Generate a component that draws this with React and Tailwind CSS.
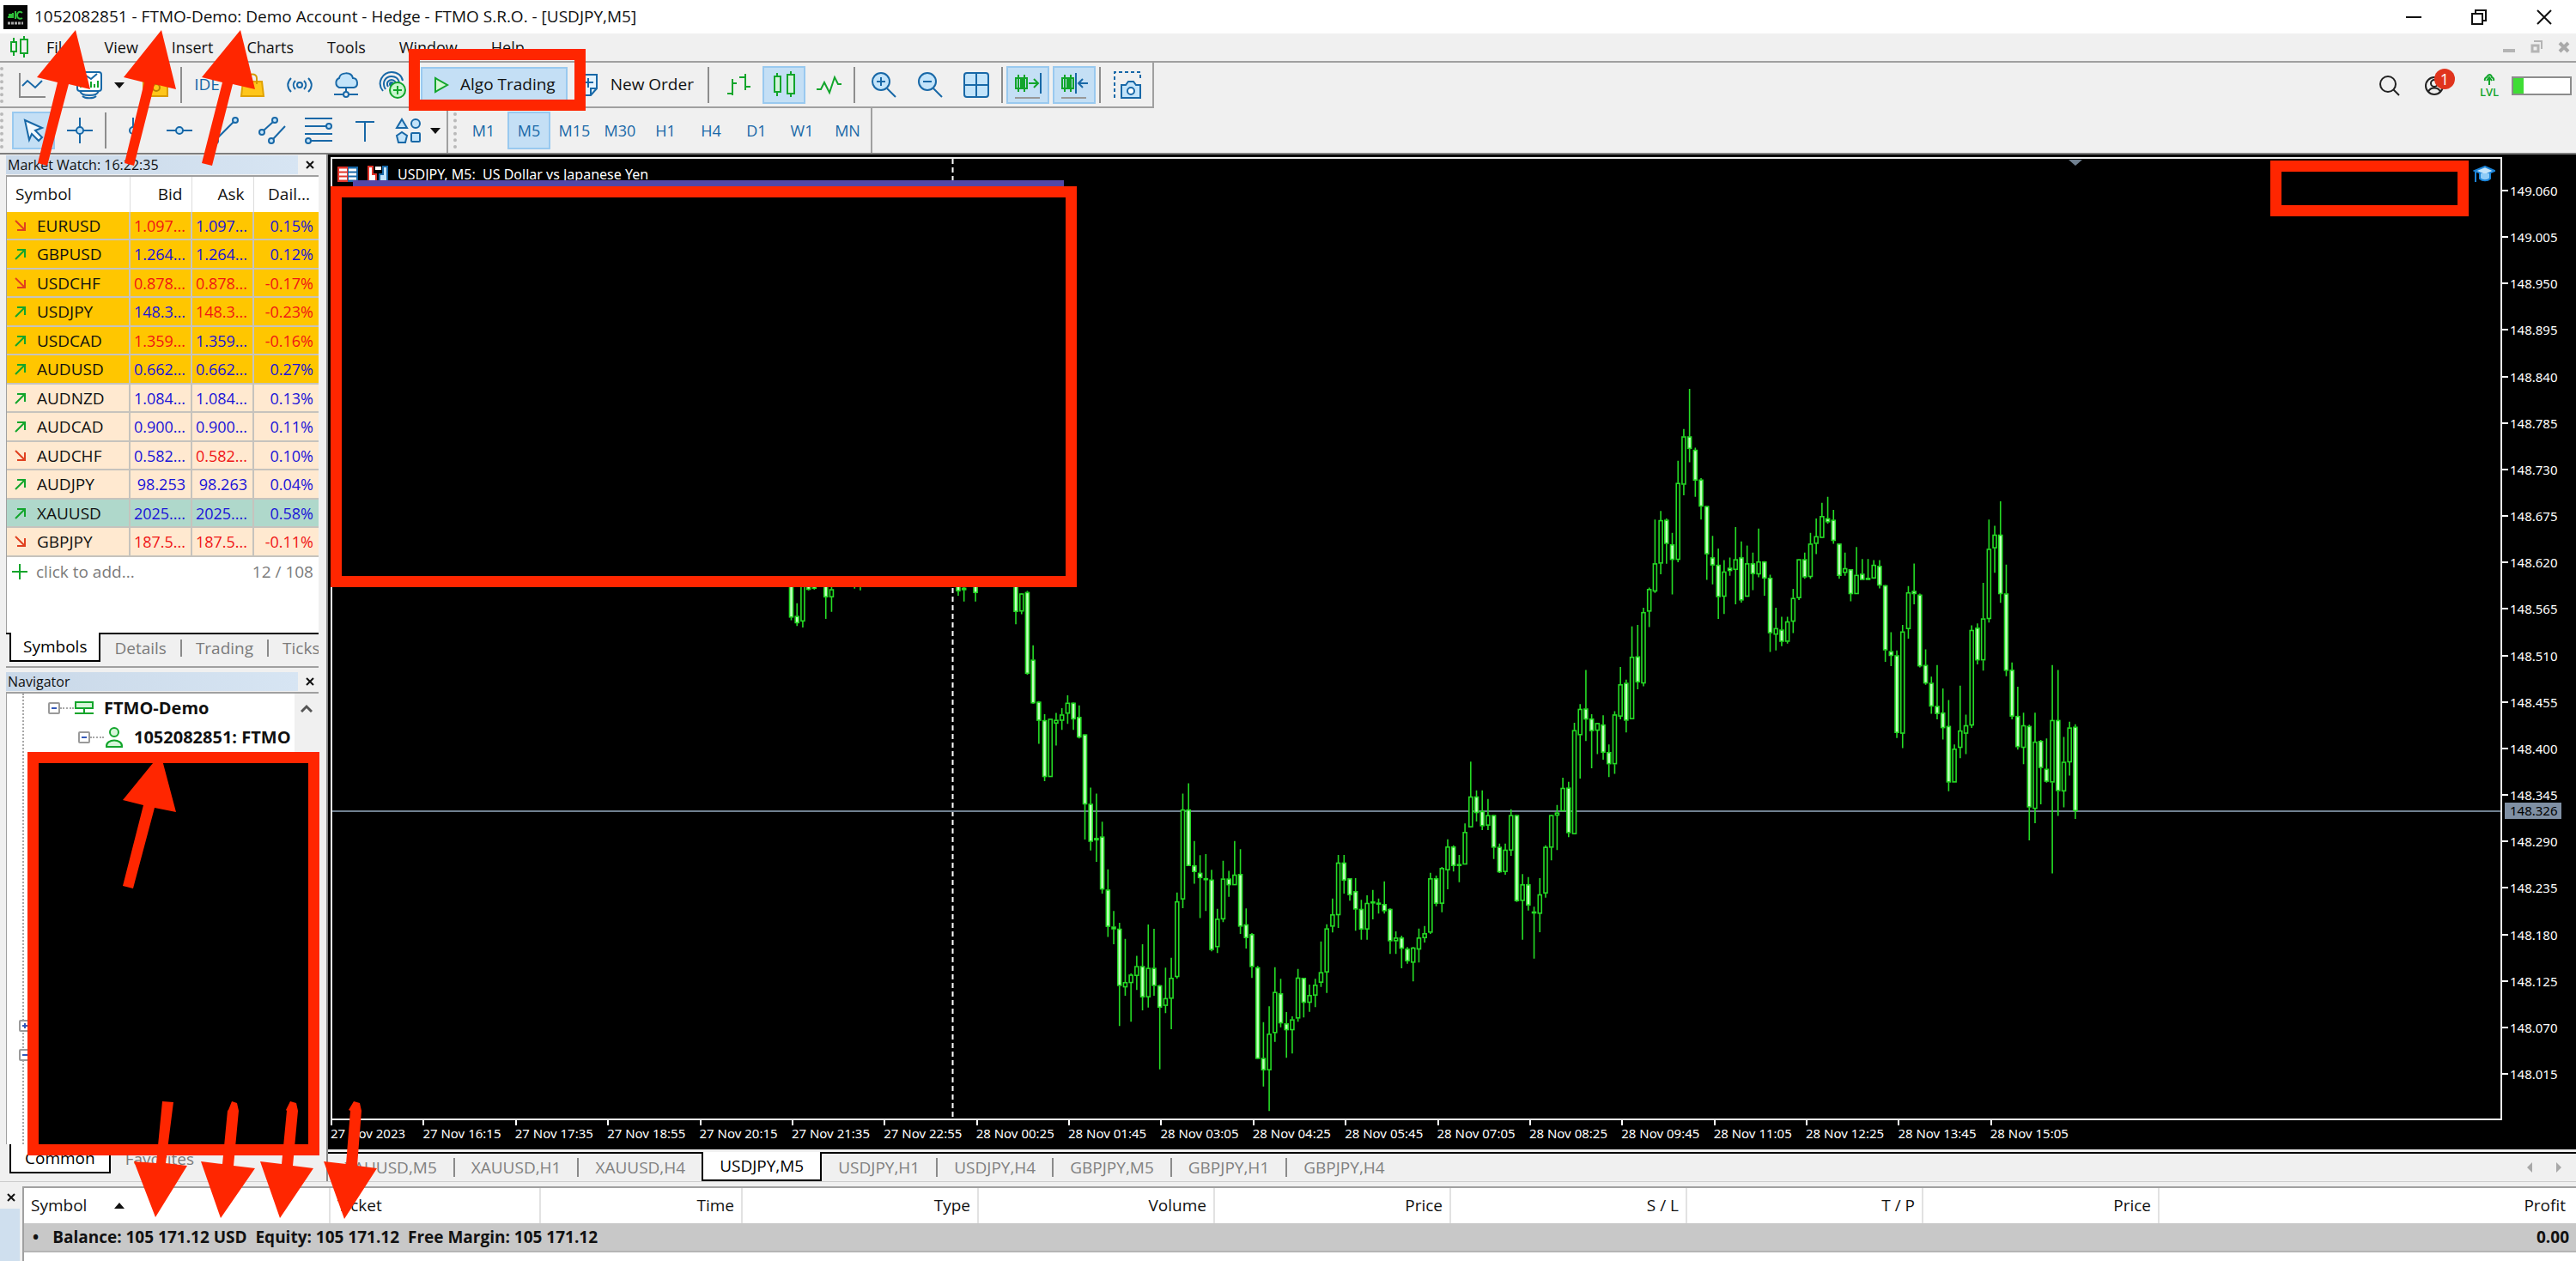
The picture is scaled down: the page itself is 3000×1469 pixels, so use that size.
import React, { useState } from "react";
import clsx from "clsx";

const BLUE = "#1868a7";
const SKY = "#c3e4fa";
const GREEN = "#12a52b";

const menus = ["File", "View", "Insert", "Charts", "Tools", "Window", "Help"];
const periods = ["M1", "M5", "M15", "M30", "H1", "H4", "D1", "W1", "MN"];

// symbol, trend, bid, bid trend, ask, ask trend, daily change
const quotes = [
  ["EURUSD", "down", "1.097...", "down", "1.097...", "up", "0.15%"],
  ["GBPUSD", "up", "1.264...", "up", "1.264...", "up", "0.12%"],
  ["USDCHF", "down", "0.878...", "down", "0.878...", "down", "-0.17%"],
  ["USDJPY", "up", "148.3...", "up", "148.3...", "down", "-0.23%"],
  ["USDCAD", "up", "1.359...", "down", "1.359...", "up", "-0.16%"],
  ["AUDUSD", "up", "0.662...", "up", "0.662...", "up", "0.27%"],
  ["AUDNZD", "up", "1.084...", "up", "1.084...", "up", "0.13%"],
  ["AUDCAD", "up", "0.900...", "up", "0.900...", "up", "0.11%"],
  ["AUDCHF", "down", "0.582...", "up", "0.582...", "down", "0.10%"],
  ["AUDJPY", "up", "98.253", "up", "98.263", "up", "0.04%"],
  ["XAUUSD", "up", "2025....", "up", "2025....", "up", "0.58%"],
  ["GBPJPY", "down", "187.5...", "down", "187.5...", "down", "-0.11%"],
];

const prices = [
  "149.060", "149.005", "148.950", "148.895", "148.840", "148.785", "148.730", "148.675", "148.620", "148.565",
  "148.510", "148.455", "148.400", "148.345", "148.290", "148.235", "148.180", "148.125", "148.070", "148.015",
];

const times = [
  "27 Nov 2023", "27 Nov 16:15", "27 Nov 17:35", "27 Nov 18:55", "27 Nov 20:15", "27 Nov 21:35", "27 Nov 22:55",
  "28 Nov 00:25", "28 Nov 01:45", "28 Nov 03:05", "28 Nov 04:25", "28 Nov 05:45", "28 Nov 07:05", "28 Nov 08:25",
  "28 Nov 09:45", "28 Nov 11:05", "28 Nov 12:25", "28 Nov 13:45", "28 Nov 15:05",
];

const chartTabs = [
  "XAUUSD,M5", "XAUUSD,H1", "XAUUSD,H4", "USDJPY,M5", "USDJPY,H1", "USDJPY,H4", "GBPJPY,M5", "GBPJPY,H1", "GBPJPY,H4",
];

// Bars are [index, high, body top, body bottom, low, bearish], measured down
// from the base line of their series in steps of 1 / unit pixels.
const series = [
  {
    base: 475,
    unit: 2.412,
    bars: [
      [0, 0, 0, 143, 151, 1], [1, 103, 139, 159, 167, 1], [2, 0, 0, 154, 171, 0], [3, 40, 40, 65, 67, 1], [4, 40, 40, 62, 65, 1],
      [6, 40, 40, 86, 147, 1], [7, 50, 64, 86, 127, 0], [11, 40, 40, 50, 62, 0], [12, 40, 40, 50, 67, 0],
      [29, 40, 40, 69, 82, 1], [30, 50, 60, 66, 98, 0], [32, 40, 40, 74, 98, 1], [39, 0, 0, 127, 162, 1], [40, 75, 76, 126, 134, 0],
      [41, 68, 72, 301, 304, 1], [42, 221, 262, 384, 386, 1], [43, 378, 380, 433, 498, 1], [44, 415, 432, 591, 603, 1],
      [45, 428, 428, 591, 591, 0], [46, 411, 431, 441, 503, 0], [47, 398, 416, 433, 459, 0], [48, 362, 383, 413, 442, 0],
      [49, 382, 383, 429, 459, 1], [50, 390, 423, 480, 483, 1], [51, 471, 472, 668, 767, 1], [52, 621, 667, 773, 798, 1],
      [53, 638, 763, 769, 830, 1], [54, 717, 759, 907, 919, 1], [55, 851, 908, 1012, 1041, 1], [56, 968, 1012, 1019, 1061, 1],
      [57, 1001, 1018, 1178, 1291, 1], [58, 1046, 1168, 1182, 1206, 0], [59, 1143, 1147, 1170, 1279, 0],
      [60, 1094, 1123, 1150, 1190, 0], [61, 1061, 1123, 1210, 1247, 1], [62, 1006, 1128, 1210, 1239, 0],
      [63, 1018, 1128, 1178, 1206, 1], [64, 1176, 1177, 1239, 1413, 1], [65, 1127, 1213, 1234, 1255, 0],
      [66, 1099, 1156, 1214, 1300, 0], [67, 916, 941, 1153, 1158, 0], [68, 638, 683, 935, 960, 0], [69, 609, 683, 841, 842, 1],
      [70, 771, 840, 858, 891, 1], [71, 811, 861, 875, 988, 1], [72, 808, 876, 878, 968, 1], [73, 852, 880, 1077, 1081, 1],
      [74, 962, 990, 1069, 1086, 0], [75, 827, 877, 991, 999, 0], [76, 855, 877, 895, 928, 1], [77, 771, 866, 895, 895, 0],
    ],
  },
  {
    base: 675,
    unit: 3,
    bars: [
      [78, 388, 475, 658, 684, 1], [79, 595, 651, 698, 735, 1], [80, 681, 685, 799, 838, 1], [81, 796, 801, 1120, 1121, 1],
      [82, 992, 1118, 1160, 1217, 1], [83, 937, 1033, 1160, 1303, 0], [84, 800, 887, 1030, 1061, 0], [85, 841, 892, 996, 1010, 1],
      [86, 957, 997, 1020, 1117, 1], [87, 972, 983, 1020, 1102, 0], [88, 806, 837, 979, 991, 0], [89, 837, 838, 924, 976, 1],
      [90, 861, 898, 924, 956, 0], [91, 841, 862, 899, 940, 0], [92, 710, 818, 854, 869, 0], [93, 650, 665, 818, 890, 0],
      [94, 560, 616, 658, 679, 0], [95, 408, 435, 618, 663, 0], [96, 408, 435, 497, 543, 1], [97, 489, 490, 548, 568, 1],
      [98, 489, 535, 598, 673, 1], [99, 565, 597, 668, 704, 1], [100, 549, 576, 668, 704, 0], [101, 530, 571, 577, 633, 1],
      [102, 560, 575, 578, 613, 1], [103, 500, 580, 604, 613, 1], [104, 595, 597, 709, 754, 1], [105, 675, 697, 709, 754, 0],
      [106, 690, 697, 735, 804, 1], [107, 730, 736, 779, 788, 1], [108, 730, 732, 784, 850, 0], [109, 665, 697, 738, 784, 0],
      [110, 656, 682, 698, 714, 0], [111, 470, 490, 679, 684, 0], [112, 480, 490, 578, 587, 1], [113, 450, 454, 578, 608, 0],
      [114, 353, 379, 461, 528, 0], [115, 374, 379, 446, 466, 1], [116, 408, 440, 446, 503, 1], [117, 298, 328, 441, 441, 0],
      [118, 82, 204, 311, 311, 0], [119, 182, 204, 261, 291, 1], [120, 182, 255, 307, 321, 1], [121, 212, 269, 305, 321, 0],
      [122, 268, 269, 382, 422, 1], [123, 368, 380, 468, 471, 1], [124, 368, 390, 467, 477, 0], [125, 248, 269, 392, 411, 0],
      [126, 268, 269, 569, 572, 1], [127, 475, 511, 568, 704, 0], [128, 485, 511, 584, 602, 1], [129, 589, 606, 612, 770, 1],
      [130, 489, 546, 613, 678, 0], [131, 374, 380, 542, 557, 0], [132, 268, 269, 382, 427, 0], [133, 233, 260, 270, 391, 0],
      [134, 138, 174, 255, 255, 0], [135, 152, 173, 331, 346, 1],
    ],
  },
  {
    base: 255,
    unit: 2.306,
    bars: [
      [136, 927, 947, 1226, 1226, 0], [137, 877, 890, 960, 1077, 0], [138, 785, 889, 918, 976, 1], [139, 904, 916, 949, 1049, 1],
      [140, 927, 928, 948, 1011, 0], [141, 907, 932, 1007, 1026, 1], [142, 985, 1006, 1038, 1073, 1], [143, 896, 905, 1038, 1064, 0],
      [144, 777, 824, 910, 918, 0], [145, 811, 820, 921, 953, 1], [146, 668, 750, 917, 917, 0], [147, 664, 749, 818, 837, 1],
      [148, 618, 630, 821, 829, 0], [149, 564, 568, 628, 670, 0], [150, 381, 499, 574, 578, 0], [151, 358, 383, 499, 528, 0],
      [152, 378, 382, 446, 500, 1], [153, 417, 448, 489, 582, 1], [154, 223, 283, 489, 496, 0], [155, 138, 158, 287, 316, 0],
      [156, 30, 158, 191, 227, 1], [157, 188, 194, 276, 320, 1], [158, 270, 274, 346, 381, 1], [159, 344, 345, 474, 543, 1],
      [160, 425, 483, 504, 555, 1], [161, 459, 503, 589, 648, 1], [162, 490, 521, 588, 635, 0], [163, 483, 511, 519, 532, 1],
      [164, 401, 488, 516, 609, 0], [165, 440, 483, 598, 604, 1], [166, 451, 499, 588, 588, 0], [167, 470, 499, 527, 571, 1],
      [168, 405, 494, 528, 536, 0], [169, 493, 494, 539, 586, 1], [170, 529, 538, 686, 737, 1], [171, 618, 673, 690, 733, 0],
      [172, 642, 677, 709, 721, 1], [173, 642, 655, 709, 714, 0], [174, 567, 592, 655, 686, 0], [175, 487, 488, 592, 597, 0],
      [176, 470, 488, 536, 540, 1], [177, 417, 446, 535, 540, 0], [178, 378, 426, 446, 474, 0], [179, 336, 372, 430, 431, 0],
      [180, 320, 378, 388, 392, 1], [181, 355, 382, 438, 446, 1], [182, 445, 446, 532, 540, 1], [183, 470, 512, 524, 532, 0],
      [184, 514, 515, 581, 601, 1], [185, 455, 530, 581, 581, 0], [186, 487, 527, 543, 543, 1], [187, 487, 538, 543, 543, 1],
      [188, 490, 503, 539, 540, 0], [189, 490, 506, 558, 566, 1], [190, 557, 558, 732, 763, 1], [191, 684, 735, 747, 775, 1],
      [192, 733, 746, 954, 968, 1], [193, 664, 682, 956, 995, 0], [194, 560, 577, 675, 701, 0], [195, 499, 573, 581, 609, 1],
      [196, 580, 583, 775, 778, 1], [197, 730, 772, 821, 825, 1], [198, 803, 820, 883, 903, 1], [199, 772, 882, 903, 918, 1],
      [200, 835, 900, 941, 972, 1], [201, 866, 936, 1087, 1111, 1], [202, 985, 997, 1087, 1087, 0], [203, 827, 948, 994, 1022, 0],
      [204, 905, 934, 956, 1011, 0], [205, 665, 678, 934, 941, 0], [206, 660, 672, 759, 770, 1], [207, 551, 647, 759, 787, 0],
      [208, 381, 460, 648, 658, 0], [209, 398, 422, 458, 524, 0], [210, 332, 422, 581, 605, 1], [211, 502, 580, 787, 802, 1],
      [212, 765, 785, 910, 918, 1], [213, 830, 909, 992, 999, 1], [214, 900, 934, 994, 1038, 0], [215, 932, 936, 1154, 1243, 1],
      [216, 900, 978, 1158, 1197, 0], [217, 973, 976, 1048, 1146, 1], [218, 969, 1051, 1085, 1088, 1], [219, 772, 920, 1087, 1332, 0],
      [220, 785, 920, 1110, 1177, 1], [221, 965, 1032, 1111, 1154, 0], [222, 924, 940, 1033, 1069, 0], [223, 931, 938, 1164, 1185, 1],
    ],
  },
];

const FIRST_BAR_X = 534.5;
const BAR_STEP = 6.706;

function Candles() {
  return (
    <g stroke="#25dc25" strokeWidth="1.6">
      {series.map(({ base, unit, bars }) =>
        bars.map(([i, high, top, bottom, low, bearish]) => {
          const x = FIRST_BAR_X + i * BAR_STEP;
          const y = (v) => base + v / unit;
          return (
            <g key={i}>
              <path d={`M${x} ${y(high)}V${y(top)}M${x} ${y(bottom)}V${y(low)}`} />
              <rect
                x={x - 2}
                y={y(top) + 0.5}
                width="4"
                height={Math.max(1, (bottom - top) / unit - 1)}
                fill={bearish ? "#c4ffc0" : "#000"}
              />
            </g>
          );
        })
      )}
    </g>
  );
}

function Icon({ children, w = 32, h = 32, stroke = BLUE, className }) {
  return (
    <svg
      width={w}
      height={h}
      viewBox={`0 0 ${w} ${h}`}
      fill="none"
      stroke={stroke}
      strokeWidth="2"
      className={clsx("shrink-0", className)}
      aria-hidden="true"
    >
      {children}
    </svg>
  );
}

function ToolButton({ label, active, children }) {
  return (
    <button
      aria-label={label}
      className={clsx(
        "flex h-11 w-[50px] shrink-0 items-center justify-center",
        active && "border-2 border-[#99c9ef] bg-[#c4dff5]"
      )}
    >
      {children}
    </button>
  );
}

function Separator() {
  return <span className="mx-1 h-[42px] w-0.5 shrink-0 bg-[#8d8d8d]" />;
}

function Grip() {
  return <span className="block h-[42px] w-1 shrink-0 border-r-4 border-dotted border-[#b9b9b9]" />;
}

function Caret() {
  return (
    <Icon w={14} h={8} stroke="none">
      <path d="M1 1h12l-6 7z" fill="#111" />
    </Icon>
  );
}

function TitleBar() {
  return (
    <header className="flex h-[39px] items-center bg-white pl-1 text-[19px]">
      <svg width="28" height="28" viewBox="0 0 28 28" aria-hidden="true">
        <rect width="28" height="28" fill="#050505" />
        <path d="M5 14h2v-3h2v3h2V9M14 7v9M22 9c-4-3-6 0-6 3s3 5 6 3" stroke="#2fbf3a" strokeWidth="2" fill="none" />
        <path d="M5 21h18" stroke="#aaa" strokeWidth="3" strokeDasharray="3 1" />
      </svg>
      <h1 className="ml-2 flex-1 whitespace-nowrap">
        1052082851 - FTMO-Demo: Demo Account - Hedge - FTMO S.R.O. - [USDJPY,M5]
      </h1>
      <div className="flex items-center gap-[58px] pr-[28px]">
        <button aria-label="Minimize">
          <Icon w={18} h={18} stroke="#111"><path d="M0 9h18" /></Icon>
        </button>
        <button aria-label="Restore">
          <Icon w={18} h={18} stroke="#111"><path d="M1 5h12v12H1zM5 5V1h12v12h-4" /></Icon>
        </button>
        <button aria-label="Close">
          <Icon w={18} h={18} stroke="#111"><path d="M1 1l16 16M17 1L1 17" /></Icon>
        </button>
      </div>
    </header>
  );
}

function MenuBar() {
  return (
    <nav className="flex h-[34px] items-center border-b-2 border-[#a0a0a0] pl-3 text-lg">
      <Icon w={22} h={26} stroke={GREEN}>
        <path d="M4 2v5M4 18v5M1 7h6v11H1zM16 0v4M16 20v5M12 4h8v16h-8z" />
      </Icon>
      <div className="ml-[20px] flex flex-1 gap-[39px]">
        {menus.map((m) => (
          <button key={m}>{m}</button>
        ))}
      </div>
      <div className="flex items-center gap-[18px] pr-[7px]">
        <Icon w={14} h={16} stroke="#b4b4b4"><path d="M0 12h14" strokeWidth="4" /></Icon>
        <Icon w={14} h={16} stroke="#b4b4b4">
          <path d="M2 6h7v7H2z" strokeWidth="3" />
          <path d="M4 1h9v9" />
        </Icon>
        <Icon w={14} h={16} stroke="#a9a9a9"><path d="M2 3l10 10M12 3L2 13" strokeWidth="4" /></Icon>
      </div>
    </nav>
  );
}

function StandardToolbar() {
  return (
    <div className="flex h-[53px] items-center">
      <div className="flex h-full items-center border-r-2 border-b-2 border-[#a0a0a0] pr-3">
        <Grip />
        <div className="ml-2 flex w-[68px] items-center gap-2">
          <button aria-label="New chart" className="flex items-center gap-2">
            <Icon w={38} h={32} className="ml-2">
              <path d="M3 2v28h30" stroke="#8a8a8a" />
              <path d="M6 17l6-6 9 8 8-8" />
            </Icon>
            <Caret />
          </button>
        </div>
        <div className="ml-2 flex w-[68px] items-center gap-2">
          <button aria-label="Profiles" className="flex items-center gap-3">
            <Icon w={32} h={34}>
              <rect x="2" y="2" width="28" height="22" rx="3" fill="#fff" />
              <path d="M6 9h3l3-3 6 4 7-6" />
              <path d="M6 14v6M10 17v3M14 15v5M18 13v7M22 16v4M26 12v8" stroke={GREEN} />
              <path d="M5 24c2 4 4 5 11 5s9-1 11-5M8 30c3 3 13 3 16 0" />
            </Icon>
            <Caret />
          </button>
        </div>
        <ToolButton label="Data folder">
          <Icon>
            <path d="M2 7h11l3 4h14v18H2z" fill="#ffc61a" stroke="#d99b00" />
            <circle cx="17" cy="19" r="4" stroke="#b98200" />
          </Icon>
        </ToolButton>
        <Separator />
        <button className="h-11 w-[50px] text-[19px] text-[#1868a7]">IDE</button>
        <div className="ml-1 flex gap-1">
          <ToolButton label="Market">
            <Icon>
              <path d="M4 12h22l2 17H2z" fill="#ffc61a" stroke="#e0a200" />
              <path d="M10 15V8c0-6 10-6 10 0v7" stroke="#d39a00" />
            </Icon>
          </ToolButton>
          <ToolButton label="Signals">
            <Icon>
              <circle cx="16" cy="16" r="3" />
              <path d="M11 11c-3 3-3 7 0 10M21 11c3 3 3 7 0 10M6 8c-5 5-5 11 0 16M26 8c5 5 5 11 0 16" />
            </Icon>
          </ToolButton>
          <ToolButton label="Virtual hosting">
            <Icon>
              <path d="M8 19a6 6 0 010-11c1-7 14-8 16 0 6 0 7 10 1 11z" fill={SKY} />
              <path d="M16 19v6M2 27h10M20 27h10" />
              <circle cx="16" cy="27" r="3" />
            </Icon>
          </ToolButton>
          <ToolButton label="Copy trading">
            <Icon w={34} h={34}>
              <path d="M6 24C-2 14 6 2 16 2c7 0 12 4 13 10M9 22c-5-8 0-15 7-15 5 0 8 3 9 7M12 19c-3-5 1-8 4-8s4 2 5 3" />
              <circle cx="16" cy="16" r="2" fill={BLUE} />
              <circle cx="23" cy="23" r="9" fill="#c9f7cf" stroke={GREEN} />
              <path d="M23 18v10M18 23h10" stroke={GREEN} />
            </Icon>
          </ToolButton>
        </div>
        <button className="ml-2 flex h-[42px] items-center gap-3 border-2 border-[#99c9ef] bg-[#c4dff5] pr-3 pl-3 text-[19px]">
          <Icon w={20} h={22} stroke={GREEN}><path d="M3 3v16l14-8z" fill="#d4f7d4" /></Icon>
          Algo Trading
        </button>
        <button className="ml-2.5 flex items-center gap-3 text-[19px]">
          <Icon w={28} h={30}>
            <path d="M4 3h20v16l-7 8H4z" fill="#e4f3fd" />
            <path d="M17 27v-8h7M14 7v11M9 12h11" />
          </Icon>
          New Order
        </button>
        <span className="w-3" />
        <Separator />
        <div className="ml-1.5 flex gap-0.5">
          <ToolButton label="Bar chart">
            <Icon stroke={GREEN}><path d="M2 26h6M8 28V9M8 14h5M16 7h7M23 3v19M23 18h6" /></Icon>
          </ToolButton>
          <ToolButton label="Candlesticks" active>
            <Icon stroke={GREEN}>
              <path d="M8 2v4M8 24v5M5 6h7v18H5zM24 0v4M24 26v4M20 4h8v22h-8z" fill="#d4f3dc" />
            </Icon>
          </ToolButton>
          <ToolButton label="Line chart">
            <Icon stroke={GREEN}><path d="M2 21h5l4-8 6 12 6-18 4 8h4" /></Icon>
          </ToolButton>
        </div>
        <Separator />
        <div className="ml-1 flex gap-1">
          <ToolButton label="Zoom in">
            <Icon><circle cx="13" cy="12" r="10" fill={SKY} /><path d="M20 20l10 10M13 7v10M8 12h10" /></Icon>
          </ToolButton>
          <ToolButton label="Zoom out">
            <Icon><circle cx="13" cy="12" r="10" fill={SKY} /><path d="M20 20l10 10M8 12h10" /></Icon>
          </ToolButton>
          <ToolButton label="Tile windows">
            <Icon>
              <rect x="2" y="2" width="28" height="28" rx="3" fill={SKY} />
              <path d="M16 2v28M2 16h28" />
            </Icon>
          </ToolButton>
        </div>
        <Separator />
        <div className="flex gap-1">
          <ToolButton label="Auto scroll" active>
            <Icon>
              <path d="M5 4v20M2 8h6v12H2zM12 4v20M10 8h5v12h-5z" stroke={GREEN} />
              <path d="M17 14h10M23 9l5 5-5 5" stroke={GREEN} />
              <path d="M31 2v24" />
              <path d="M1 31h29" stroke="#999" />
            </Icon>
          </ToolButton>
          <ToolButton label="Chart shift" active>
            <Icon>
              <path d="M5 4v20M2 8h6v12H2zM12 4v20M10 8h5v12h-5z" stroke={GREEN} />
              <path d="M18 2v24M21 14h11M26 9l-5 5 5 5" />
              <path d="M1 31h29" stroke="#999" />
            </Icon>
          </ToolButton>
        </div>
        <Separator />
        <button aria-label="Screenshot" className="ml-2.5">
          <Icon w={34} h={34}>
            <path d="M2 32V2h30v10" strokeDasharray="4 3" />
            <path d="M10 17h5l3-4h6l3 4h5v15H10z" fill={SKY} />
            <circle cx="21" cy="24" r="4" fill="#fff" />
          </Icon>
        </button>
      </div>
      <div className="flex flex-1 items-center justify-end pr-[5px]">
        <button aria-label="Search">
          <Icon w={24} h={24} stroke="#222"><circle cx="10" cy="10" r="9" /><path d="M16 16l7 7" /></Icon>
        </button>
        <button aria-label="Account, 1 notification" className="relative ml-[28px] w-[36px]">
          <Icon w={24} h={24} stroke="#222">
            <circle cx="12" cy="12" r="10" /><circle cx="12" cy="9" r="4" /><path d="M5 19c2-6 12-6 14 0" />
          </Icon>
          <span className="absolute -top-2 left-3 h-6 w-6 rounded-full bg-[#e0341d] text-center text-lg leading-6 text-white">
            1
          </span>
        </button>
        <div className="ml-[28px] flex w-[24px] flex-col items-center">
          <Icon w={16} h={14} stroke={GREEN}><path d="M8 13V5M3 8a3 3 0 012-4c2-4 5-4 6 0a3 3 0 012 4M5 8l3-4 3 4" /></Icon>
          <span className="text-[13px] leading-[14px] font-semibold text-[#12a52b]">LVL</span>
        </div>
        <div className="ml-[14px] h-[22px] w-[70px] border-2 border-[#8c8c8c] bg-white">
          <div className="h-full w-3 bg-[#3fdd35]" />
        </div>
      </div>
    </div>
  );
}

function DrawingToolbar({ period, setPeriod }) {
  return (
    <div className="flex h-[52px] items-center">
      <Grip />
      <div className="ml-2.5 flex items-center gap-1">
        <ToolButton label="Cursor" active>
          <Icon>
            <path d="M6 4l20 9-8 3 8 8-4 4-8-8-3 7z" fill="#f2f9fe" />
          </Icon>
        </ToolButton>
        <ToolButton label="Crosshair">
          <Icon><path d="M16 1v11M16 20v11M1 16h11M20 16h11" /><circle cx="16" cy="16" r="4" fill={SKY} /></Icon>
        </ToolButton>
      </div>
      <Separator />
      <div className="ml-0.5 flex items-center gap-1">
        <ToolButton label="Vertical line">
          <Icon><path d="M16 1v11M16 20v11" /><circle cx="16" cy="16" r="4" fill={SKY} /></Icon>
        </ToolButton>
        <ToolButton label="Horizontal line">
          <Icon><path d="M1 16h11M20 16h11" /><circle cx="16" cy="16" r="4" fill={SKY} /></Icon>
        </ToolButton>
        <ToolButton label="Trend line">
          <Icon><path d="M5 26L25 6" /><circle cx="27" cy="4" r="3" fill={SKY} /><circle cx="4" cy="28" r="3" fill={SKY} /></Icon>
        </ToolButton>
        <ToolButton label="Channel">
          <Icon>
            <path d="M6 16L17 6M17 26L31 11" />
            <circle cx="19" cy="4" r="3" fill={SKY} /><circle cx="4" cy="18" r="3" fill={SKY} /><circle cx="15" cy="28" r="3" fill={SKY} />
          </Icon>
        </ToolButton>
        <ToolButton label="Fibonacci">
          <Icon>
            <path d="M0 2h32M0 11h25M0 20h32M7 28h25" />
            <circle cx="28" cy="11" r="3" fill={SKY} /><circle cx="4" cy="28" r="3" fill={SKY} />
          </Icon>
        </ToolButton>
        <ToolButton label="Text">
          <Icon w={24} h={28}><path d="M1 4h22M12 4v23" /></Icon>
        </ToolButton>
        <button aria-label="Shapes" className="flex w-[60px] items-center justify-end gap-2">
          <Icon>
            <path d="M8 3l6 10H2zM2 22l6-4 6 4-2 8H4z" fill={SKY} />
            <circle cx="24" cy="8" r="5" fill={SKY} />
            <rect x="19" y="19" width="10" height="10" rx="1" fill={SKY} />
          </Icon>
          <Caret />
        </button>
      </div>
      <span className="ml-1.5 h-full w-0.5 bg-[#a0a0a0]" />
      <span className="ml-1.5"><Grip /></span>
      <div className="ml-1.5 flex h-full items-center gap-[3px] border-r-2 border-[#a0a0a0] pr-0.5">
        {periods.map((p) => (
          <button
            key={p}
            aria-pressed={p === period}
            onClick={() => setPeriod(p)}
            className={clsx(
              "h-11 w-[50px] text-lg text-[#1868a7]",
              p === period && "border-2 border-[#99c9ef] bg-[#c4dff5]"
            )}
          >
            {p}
          </button>
        ))}
      </div>
    </div>
  );
}

function PanelTitle({ children }) {
  return (
    <div className="flex h-[26px] shrink-0 items-center border-b-2 border-[#a0a0a0]">
      <h2 className="h-[22px] flex-1 bg-linear-to-r from-[#c9d8e8] to-[#d7e5f3] pl-0.5 text-base leading-[22px]">
        {children}
      </h2>
      <button aria-label="Close" className="ml-1 flex h-5 w-5 items-center justify-center">
        <Icon w={12} h={12} stroke="#111"><path d="M2 2l8 8M10 2l-8 8" /></Icon>
      </button>
    </div>
  );
}

function TrendArrow({ dir }) {
  return dir === "up" ? (
    <Icon w={14} h={14} stroke={GREEN} className="mx-auto"><path d="M1 13L12 2M3 2h9v9" /></Icon>
  ) : (
    <Icon w={14} h={14} stroke="#e0401f" className="mx-auto"><path d="M1 1l11 11M12 3v9H3" /></Icon>
  );
}

function MarketWatch() {
  return (
    <section className="flex h-[598px] shrink-0 flex-col border-b-2 border-[#a0a0a0]">
      <PanelTitle>Market Watch: 16:22:35</PanelTitle>
      <div className="flex-1 border-l border-[#a0a0a0] bg-white">
        <table className="w-full table-fixed border-collapse">
          <thead>
            <tr className="h-[41px] text-[19px]">
              <th className="w-[143px] pl-2.5 text-left font-normal">Symbol</th>
              <th className="border-l border-[#ddd] pr-2.5 text-right font-normal">Bid</th>
              <th className="border-l border-[#ddd] pr-2.5 text-right font-normal">Ask</th>
              <th className="w-[76px] border-l border-[#ddd] pr-2.5 text-right font-normal">Dail...</th>
            </tr>
          </thead>
        </table>
        <table className="h-[402px] w-full table-fixed border-collapse text-lg leading-6">
          <tbody>
            {quotes.map(([symbol, trend, bid, bidTrend, ask, askTrend, daily], i) => (
              <tr
                key={symbol}
                className={clsx(
                  "border-b-2 border-[#c6c3bd]",
                  i < 6 ? "bg-[#ffc600]" : symbol === "XAUUSD" ? "bg-[#afd8cb]" : "bg-[#ffe9d0]"
                )}
              >
                <td className="w-[32px]"><TrendArrow dir={trend} /></td>
                <td className="w-[111px] pl-[3px] text-[19px]">{symbol}</td>
                <td
                  className={clsx(
                    "border-l-2 border-[#c6c3bd] pr-1.5 text-right",
                    bidTrend === "up" ? "text-[#1a14d8]" : "text-[#f01414]"
                  )}
                >
                  {bid}
                </td>
                <td
                  className={clsx(
                    "border-l-2 border-[#c6c3bd] pr-1.5 text-right",
                    askTrend === "up" ? "text-[#1a14d8]" : "text-[#f01414]"
                  )}
                >
                  {ask}
                </td>
                <td
                  className={clsx(
                    "w-[76px] border-l-2 border-[#c6c3bd] pr-1.5 text-right",
                    daily.startsWith("-") ? "text-[#f01414]" : "text-[#1a14d8]"
                  )}
                >
                  {daily}
                </td>
              </tr>
            ))}
          </tbody>
        </table>
        <button className="flex h-[34px] w-full items-center pr-1.5 pl-1.5 text-[19px] text-[#7b7b7b]">
          <Icon w={18} h={18} stroke={GREEN}><path d="M9 0v18M0 9h18" /></Icon>
          <span className="ml-2.5 flex-1 text-left">click to add...</span>
          <span>12 / 108</span>
        </button>
      </div>
      <div className="mb-[5px] flex h-[34px] shrink-0 overflow-hidden text-[19px] whitespace-nowrap text-[#7b7b7b]">
        <span className="w-1 shrink-0 border-t-2 border-black" />
        <button className="shrink-0 border-2 border-t-0 border-black bg-white px-3.5 text-black">Symbols</button>
        <div className="flex flex-1 items-center border-t-2 border-black">
          <button className="px-4">Details</button>
          <span className="h-5 w-0.5 shrink-0 bg-[#8a8a8a]" />
          <button className="px-4">Trading</button>
          <span className="h-5 w-0.5 shrink-0 bg-[#8a8a8a]" />
          <button className="pl-4">Ticks</button>
        </div>
      </div>
    </section>
  );
}

function Expander({ plus }) {
  return (
    <Icon w={14} h={14} stroke="#9a9a9a" className="bg-white">
      <rect x="1" y="1" width="12" height="12" rx="1" />
      <path d={plus ? "M4 7h6M7 4v6" : "M4 7h6"} stroke="#3458b8" />
    </Icon>
  );
}

function Navigator() {
  return (
    <section className="flex flex-1 flex-col pt-1">
      <PanelTitle>Navigator</PanelTitle>
      <div className="flex flex-1 border-l border-[#a0a0a0] bg-white">
        <div className="relative w-5 border-r-2 border-dotted border-[#a8a8a8]">
          <div className="absolute top-[380px] left-3.5 flex flex-col gap-5">
            <Expander plus />
            <Expander />
          </div>
        </div>
        <ul className="flex-1 overflow-hidden text-xl leading-[34px] font-bold whitespace-nowrap">
          <li className="flex items-center pl-[28px]">
            <Expander />
            <span className="w-4 border-t-2 border-dotted border-[#a8a8a8]" />
            <Icon w={24} h={18} stroke={GREEN}>
              <path d="M2 2h20v7H2zM12 9v5M1 15h22" fill="#d7f7da" />
            </Icon>
            <span className="ml-[11px]">FTMO-Demo</span>
          </li>
          <li className="flex items-center pl-[63px]">
            <Expander />
            <span className="w-4 border-t-2 border-dotted border-[#a8a8a8]" />
            <Icon w={24} h={26} stroke={GREEN}>
              <circle cx="12" cy="7" r="5" fill="#d7f7da" />
              <path d="M3 24c-1-10 19-10 18 0z" fill="#d7f7da" />
            </Icon>
            <span className="ml-[11px]">1052082851: FTMO</span>
          </li>
        </ul>
        <div className="flex w-7 shrink-0 justify-center bg-[#f0f0f0] pt-3">
          <Icon w={14} h={10} stroke="#555"><path d="M1 9l6-6 6 6" strokeWidth="3" /></Icon>
        </div>
      </div>
      <div className="mb-[9px] flex h-[34px] shrink-0 text-[19px] text-[#7b7b7b]">
        <span className="w-1" />
        <button className="border-2 border-t-0 border-black bg-white px-4 text-black">Common</button>
        <button className="px-[17px]">Favorites</button>
      </div>
    </section>
  );
}

function Chart() {
  return (
    <section className="flex min-w-0 flex-1 flex-col bg-black pt-[3px] pl-[3px] font-['Noto_Sans',sans-serif] text-[15px] text-white">
      <div className="flex flex-1">
        <div className="relative min-w-0 flex-1 border-2 border-[#eee]">
          <svg className="block h-full w-full" role="img" aria-label="USDJPY five minute candles">
            <path d="M722.5 0V1121" stroke="#fff" strokeWidth="2" strokeDasharray="6 4" />
            <line x1="0" x2="100%" y1="760" y2="760" stroke="#708090" strokeWidth="2" />
            <path d="M2022 1h16l-8 7z" fill="#708090" />
            <Candles />
          </svg>
          <div className="absolute top-[8px] left-[6px] flex items-center gap-[11px]">
            <Icon w={24} h={20} stroke="none">
              <path d="M0 1h12v18H0z" fill="#e2352b" /><path d="M12 1h12v18H12z" fill="#1868a7" />
              <path d="M2 5h9M2 10h9M2 15h9M13 5h9M13 10h9M13 15h9" stroke="#fff" strokeWidth="3" />
            </Icon>
            <Icon w={24} h={20} stroke="none">
              <path d="M1 1h5v9h4v9H1z" fill="#fff" stroke="#e2352b" strokeWidth="2" />
              <path d="M9 1h7v4H9z" fill="#fff" />
              <path d="M23 1h-5v9h-4v9h9z" fill={SKY} stroke="#1868a7" strokeWidth="2" />
            </Icon>
            <h2 className="text-base leading-5 whitespace-pre">USDJPY, M5:  US Dollar vs Japanese Yen</h2>
          </div>
          <div className="absolute top-[8px] right-[6px]">
            <Icon w={26} h={20} stroke="#1b84d8">
              <path d="M2 6l12-5 11 5-11 5z" fill={SKY} />
              <path d="M8 9v6c3 3 9 3 12 0V9M3 7v12" fill="#8fccf7" />
            </Icon>
          </div>
        </div>
        <div className="relative flex w-[86px] flex-col justify-between pt-[29px] pb-[44px]">
          {prices.map((p) => (
            <div key={p} className="flex items-center leading-5">
              <span className="h-0.5 w-[7px] bg-white" />
              <span className="ml-[2px]">{p}</span>
            </div>
          ))}
          <span className="absolute top-[752px] left-[3px] w-[66px] bg-[#7f8fa3] pl-1.5 leading-[19px] text-black">
            148.326
          </span>
        </div>
      </div>
      <div className="flex h-[34px] w-[2040px]">
        {times.map((t) => (
          <div key={t} className="flex-1 whitespace-nowrap">
            <span className="block h-1.5 w-0.5 bg-white" />
            <span className="block leading-[18px]">{t}</span>
          </div>
        ))}
      </div>
    </section>
  );
}

function ChartTabs() {
  const [tab, setTab] = useState("USDJPY,M5");
  return (
    <div className="flex h-[37px] bg-[#f0f0f0] pt-[3px] text-[19px] text-[#808080]">
      {chartTabs.map((t, i) => (
        <button
          key={t}
          onClick={() => setTab(t)}
          className={clsx(
            "flex items-center border-black",
            t === tab ? "border-x-2 border-b-2 bg-white text-black" : "border-t-2"
          )}
        >
          <span className="px-[19px]">{t}</span>
          {t !== tab && chartTabs[i + 1] !== tab && i < chartTabs.length - 1 && (
            <span className="h-[22px] w-0.5 bg-[#8a8a8a]" />
          )}
        </button>
      ))}
      <div className="flex flex-1 items-center justify-end gap-[28px] border-t-2 border-black pr-4">
        <Icon w={7} h={12} stroke="none"><path d="M7 0v12L1 6z" fill="#a8a8a8" /></Icon>
        <Icon w={7} h={12} stroke="none"><path d="M0 0v12l6-6z" fill="#a8a8a8" /></Icon>
      </div>
    </div>
  );
}

function Terminal() {
  const columns = ["Time", "Type", "Volume", "Price", "S / L", "T / P", "Price"];
  return (
    <section className="flex h-[93px] shrink-0 border-t border-[#ccc] bg-[#f0f0f0] pt-[5px]">
      <div className="flex w-[26px] flex-col">
        <button aria-label="Close" className="flex h-[26px] items-center justify-center">
          <Icon w={12} h={12} stroke="#111"><path d="M2 2l8 8M10 2l-8 8" /></Icon>
        </button>
        <div className="mr-[3px] flex-1 bg-[#cfdfee]" />
      </div>
      <div className="flex-1 border-t-2 border-l-2 border-[#a0a0a0] bg-white">
        <table className="w-full table-fixed border-collapse text-[19px]">
          <thead>
            <tr className="h-[41px]">
              <th className="w-[356px] pl-2 text-left font-normal">
                <span className="flex items-center gap-[32px]">
                  Symbol
                  <Icon w={12} h={7} stroke="none"><path d="M0 7h12L6 0z" fill="#111" /></Icon>
                </span>
              </th>
              <th className="w-[245px] border-l-2 border-[#e2e2e2] pl-2 text-left font-normal">Ticket</th>
              {columns.map((c, i) => (
                <th
                  key={i}
                  className={clsx("border-l-2 border-[#e2e2e2] pr-2 text-right font-normal", i === 0 && "w-[235px]")}
                >
                  {c}
                </th>
              ))}
              <th className="w-[486px] border-l-2 border-[#e2e2e2] pr-3 text-right font-normal">Profit</th>
            </tr>
          </thead>
          <tbody>
            <tr className="h-[33px] border-b-2 border-[#b4b4b4] bg-[#c8c8c8] font-bold">
              <td colSpan="9" className="pl-2.5 whitespace-pre">
                <span className="mr-4">•</span>
                Balance: 105 171.12 USD  Equity: 105 171.12  Free Margin: 105 171.12
              </td>
              <td className="pr-2 text-right">0.00</td>
            </tr>
          </tbody>
        </table>
      </div>
    </section>
  );
}

// Red marks drawn over the window: frames, blacked-out areas and arrows
function Annotations() {
  return (
    <div className="pointer-events-none absolute inset-0 overflow-hidden">
      <div className="absolute top-[57px] left-[476px] h-[72px] w-[206px] border-[13px] border-[#ff2600]" />
      <div className="absolute top-[210px] left-[411px] h-2 w-[828px] bg-[#5347a6]" />
      <div className="absolute top-[217px] left-[385px] h-[467px] w-[869px] border-[13px] border-[#ff2600] bg-black" />
      <div className="absolute top-[187px] right-[125px] h-[65px] w-[231px] border-[13px] border-[#ff2600]" />
      <div className="absolute top-[876px] left-[32px] h-[470px] w-[340px] border-[13px] border-[#ff2600] bg-black" />
      <svg className="absolute top-0 left-0 h-[1469px] w-[500px]" fill="#ff2600" aria-hidden="true">
        <path d="M88 35L105 104L80 98L55 193L44 190L67 96L43 90Z" />
        <path d="M188 35L205 104L180 98L156 193L145 190L168 96L144 90Z" />
        <path d="M280 35L297 104L271 98L247 193L235 190L259 96L235 90Z" />
        <path d="M187 878L205 946L180 941L155 1035L143 1032L167 938L143 932Z" />
        <path d="M189 1283L202 1284L193 1355L218 1358L181 1418L156 1353L182 1355Z" />
        <path d="M266 1293L270 1283L276 1285L278 1294L272 1358L297 1361L257 1419L234 1353L259 1356L265 1294Z" />
        <path d="M333 1293L338 1283L345 1285L347 1294L341 1358L365 1361L326 1419L303 1353L328 1356L334 1294Z" />
        <path d="M406 1293L412 1283L419 1285L421 1294L416 1358L439 1361L401 1420L377 1353L403 1356L408 1294Z" />
      </svg>
    </div>
  );
}

export default function App() {
  const [period, setPeriod] = useState("M5");

  return (
    <div className="relative flex min-h-screen flex-col bg-[#f0f0f0] font-['Open_Sans','Noto_Sans',sans-serif] text-[#111]">
      <TitleBar />
      <MenuBar />
      <StandardToolbar />
      <DrawingToolbar period={period} setPeriod={setPeriod} />
      <div className="h-0.5 bg-[#7d7d7d]" />

      <main className="flex flex-1">
        <aside className="flex w-[380px] shrink-0 flex-col pr-[9px] pl-[7px]">
          <MarketWatch />
          <Navigator />
        </aside>
        <div className="flex min-w-0 flex-1 flex-col border-l-2 border-[#8a8a8a]">
          <Chart />
          <ChartTabs />
        </div>
      </main>

      <Terminal />
      <Annotations />
    </div>
  );
}
